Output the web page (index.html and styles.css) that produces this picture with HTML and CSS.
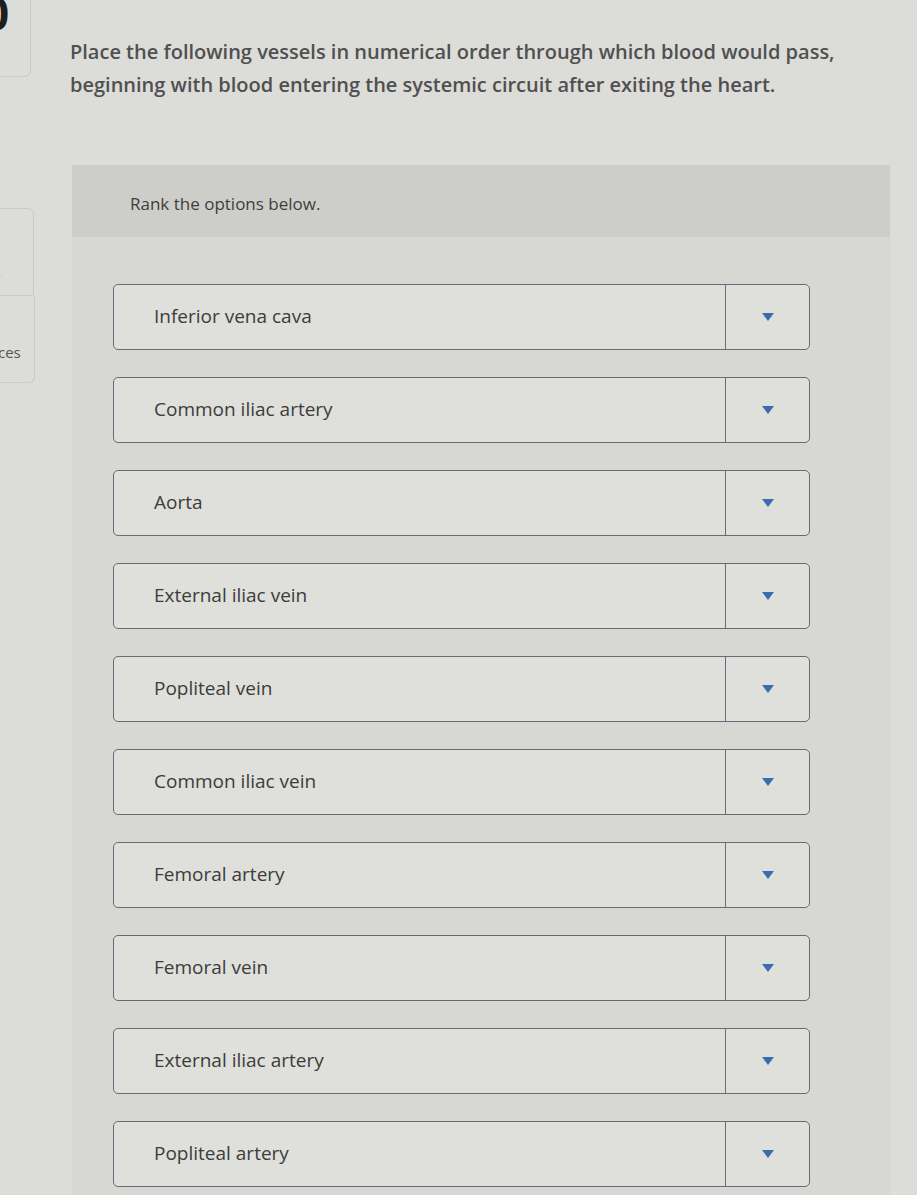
FILE: index.html
```html
<!DOCTYPE html>
<html>
<head>
<meta charset="utf-8">
<link rel="stylesheet" href="styles.css">
</head>
<body>
<div class="page">
  <aside class="sidebar">
    <div class="sbox top"><span class="big">0</span></div>
    <div class="sgroup">
      <div class="sbox mid"><span class="cut">t</span></div>
      <div class="sbox low"><span class="res">ces</span></div>
    </div>
  </aside>
  <main class="main">
    <h1 class="question">Place the following vessels in numerical order through which blood would pass, beginning with blood entering the systemic circuit after exiting the heart.</h1>
    <section class="panel">
      <div class="banner">Rank the options below.</div>
      <div class="rows">
        <div class="row"><span class="label">Inferior vena cava</span><span class="drop"><span class="tri"></span></span></div>
        <div class="row"><span class="label">Common iliac artery</span><span class="drop"><span class="tri"></span></span></div>
        <div class="row"><span class="label">Aorta</span><span class="drop"><span class="tri"></span></span></div>
        <div class="row"><span class="label">External iliac vein</span><span class="drop"><span class="tri"></span></span></div>
        <div class="row"><span class="label">Popliteal vein</span><span class="drop"><span class="tri"></span></span></div>
        <div class="row"><span class="label">Common iliac vein</span><span class="drop"><span class="tri"></span></span></div>
        <div class="row"><span class="label">Femoral artery</span><span class="drop"><span class="tri"></span></span></div>
        <div class="row"><span class="label">Femoral vein</span><span class="drop"><span class="tri"></span></span></div>
        <div class="row"><span class="label">External iliac artery</span><span class="drop"><span class="tri"></span></span></div>
        <div class="row"><span class="label">Popliteal artery</span><span class="drop"><span class="tri"></span></span></div>
      </div>
    </section>
  </main>
</div>
</body>
</html>
```

FILE: styles.css
```css
html, body {
  margin: 0;
  padding: 0;
}
body {
  background: #dcdcd8;
  font-family: "Open Sans", "Liberation Sans", Arial, sans-serif;
  color: #444;
  width: 917px;
  height: 1195px;
  overflow: hidden;
}
.page {
  display: flex;
  height: 1195px;
  overflow: hidden;
}
.sidebar {
  width: 36px;
  flex: none;
  display: flex;
  flex-direction: column;
  overflow: hidden;
}
.sbox {
  border: 1px solid #c9c9c5;
  border-radius: 6px;
  margin-left: -12px;
  box-sizing: border-box;
}
.sbox.top {
  width: 43px;
  height: 88px;
  margin-top: -11px;
  overflow: hidden;
}
.big {
  display: block;
  font-size: 44px;
  font-weight: 700;
  color: #1e1e1e;
  margin-left: -5px;
  line-height: 46px;
}
.sgroup {
  margin-top: 131px;
  display: flex;
  flex-direction: column;
}
.sbox.mid {
  width: 46px;
  height: 88px;
  border-radius: 0 6px 0 0;
  overflow: hidden;
  padding-top: 52px;
}
.sbox.low {
  width: 47px;
  height: 87px;
  border-top: none;
  border-radius: 0 0 6px 0;
  overflow: hidden;
  padding-top: 46px;
}
.cut {
  display: block;
  font-size: 15px;
  color: #555;
  margin-left: 6px;
}
.res {
  display: block;
  font-size: 15px;
  color: #555;
  margin-left: 9px;
  white-space: nowrap;
}
.main {
  flex: 1;
  padding-left: 34px;
}
.question {
  margin: 35px 0 0 0;
  width: 820px;
  font-size: 20px;
  line-height: 33px;
  font-weight: 600;
  color: #505050;
}
.panel {
  margin-top: 64px;
  margin-left: 2px;
  width: 818px;
  background: #d7d7d3;
  height: 1030px;
  overflow: hidden;
}
.banner {
  height: 72px;
  background: #cdcdca;
  box-sizing: border-box;
  padding-left: 58px;
  padding-top: 27px;
  font-size: 17px;
  color: #3e3e3e;
}
.rows {
  padding-top: 47px;
  padding-left: 41px;
  display: flex;
  flex-direction: column;
  gap: 27px;
}
.row {
  width: 697px;
  height: 66px;
  flex: none;
  box-sizing: border-box;
  border: 1.5px solid #646b79;
  border-radius: 5px;
  background: #dfdfdb;
  display: flex;
  align-items: center;
}
.label {
  flex: 1;
  padding-left: 40px;
  font-size: 19px;
  color: #3c3c3c;
  margin-top: -2px;
}
.drop {
  width: 83px;
  height: 100%;
  border-left: 1.5px solid #646b79;
  display: flex;
  align-items: center;
  justify-content: center;
}
.tri {
  width: 0;
  height: 0;
  border-left: 6.5px solid transparent;
  border-right: 6.5px solid transparent;
  border-top: 8px solid #3a6cb0;
}
```
